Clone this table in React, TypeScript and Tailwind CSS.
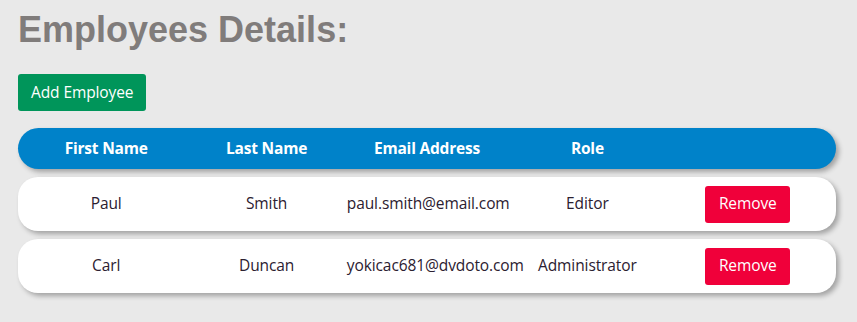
import React from "react";

type Employee = {
  firstName: string;
  lastName: string;
  email: string;
  role: string;
};

const employees: Employee[] = [
  { firstName: "Paul", lastName: "Smith", email: "paul.smith@email.com", role: "Editor" },
  { firstName: "Carl", lastName: "Duncan", email: "yokicac681@dvdoto.com", role: "Administrator" },
];

const columns = ["First Name", "Last Name", "Email Address", "Role", ""];

const App = () => {
  return (
    <div className="min-h-screen bg-[#e9e9e9] px-[18px] pt-[8px] font-['Open_Sans',sans-serif]">
      <h1 className="text-[36px] leading-[44px] font-bold text-[#807c7b] font-['Liberation_Sans',Arial,sans-serif]">
        Employees Details:
      </h1>

      <button className="mt-[22px] h-[37px] px-[13px] bg-[#00955a] text-white text-[15.5px] tracking-[-0.1px] rounded-[3px]">
        Add Employee
      </button>

      <div className="mt-[17px] mr-[3px]">
        <div className="grid grid-cols-5 px-2 h-[41px] items-center rounded-full bg-[#0082c9] text-white text-[15.5px] tracking-[-0.2px] font-bold shadow-[3px_3px_5px_rgba(0,0,0,0.3)]">
          {columns.map((c, i) => (
            <div key={i} className="text-center">
              {c}
            </div>
          ))}
        </div>

        <div className="mt-[8px] flex flex-col gap-2">
          {employees.map((e) => (
            <div
              key={e.email}
              className="grid grid-cols-5 px-2 h-[54px] items-center rounded-[20px] bg-white text-[#2b2030] text-[15.5px] tracking-[-0.1px] shadow-[3px_3px_5px_rgba(0,0,0,0.3)]"
            >
              <div className="text-center">{e.firstName}</div>
              <div className="text-center">{e.lastName}</div>
              <div className="text-center whitespace-nowrap">{e.email}</div>
              <div className="text-center">{e.role}</div>
              <div className="flex justify-center">
                <button className="h-[37px] w-[85px] bg-[#f0003a] text-white text-[15.5px] rounded-[3px]">
                  Remove
                </button>
              </div>
            </div>
          ))}
        </div>
      </div>
    </div>
  );
};

export default App;
